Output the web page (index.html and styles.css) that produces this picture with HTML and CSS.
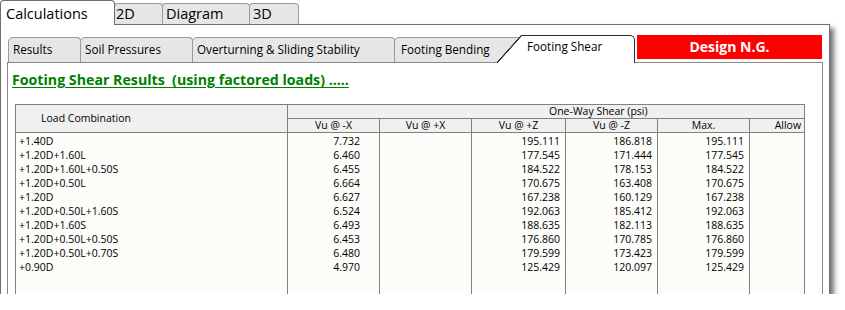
FILE: index.html
```html
<!DOCTYPE html>
<html lang="en">
<head>
    <meta charset="utf-8" />
    <title>Footing Shear</title>
    <link rel="stylesheet" href="styles.css">
</head>
<body>
    <div class="window">
        <div class="main-tabs">
            <div class="main-tab active">Calculations</div>
            <div class="main-tab tab-2d">2D</div>
            <div class="main-tab tab-diagram">Diagram</div>
            <div class="main-tab tab-3d">3D</div>
        </div>

        <div class="main-panel">
            <div class="sub-tabs">
                <div class="sub-tab tab-results">Results</div>
                <div class="sub-tab tab-soil">Soil Pressures</div>
                <div class="sub-tab tab-overturning">Overturning &amp; Sliding Stability</div>
                <div class="sub-tab tab-bending">Footing Bending</div>
                <div class="sub-tab active tab-shear">Footing Shear</div>
                <div class="design-status">Design N.G.</div>
            </div>

            <div class="sub-panel">
                <h2 class="results-title">Footing Shear Results&nbsp; (using factored loads) .....</h2>

                <div class="grid-wrap">
                    <table class="results-grid">
                        <colgroup>
                            <col class="col-load">
                            <col class="col-num">
                            <col class="col-num">
                            <col class="col-wide">
                            <col class="col-num">
                            <col class="col-num">
                            <col class="col-allow">
                        </colgroup>
                        <thead>
                            <tr>
                                <th rowspan="2" class="head-load">Load Combination</th>
                                <th colspan="6" class="head-group">One-Way Shear (psi)</th>
                            </tr>
                            <tr class="head-sub">
                                <th>Vu @ -X</th>
                                <th>Vu @ +X</th>
                                <th>Vu @ +Z</th>
                                <th>Vu @ -Z</th>
                                <th>Max.</th>
                                <th class="head-allow">Allow</th>
                            </tr>
                        </thead>
                        <tbody>
                            <tr><td>+1.40D</td><td class="num-x">7.732</td><td></td><td>195.111</td><td>186.818</td><td>195.111</td><td></td></tr>
                            <tr><td>+1.20D+1.60L</td><td class="num-x">6.460</td><td></td><td>177.545</td><td>171.444</td><td>177.545</td><td></td></tr>
                            <tr><td>+1.20D+1.60L+0.50S</td><td class="num-x">6.455</td><td></td><td>184.522</td><td>178.153</td><td>184.522</td><td></td></tr>
                            <tr><td>+1.20D+0.50L</td><td class="num-x">6.664</td><td></td><td>170.675</td><td>163.408</td><td>170.675</td><td></td></tr>
                            <tr><td>+1.20D</td><td class="num-x">6.627</td><td></td><td>167.238</td><td>160.129</td><td>167.238</td><td></td></tr>
                            <tr><td>+1.20D+0.50L+1.60S</td><td class="num-x">6.524</td><td></td><td>192.063</td><td>185.412</td><td>192.063</td><td></td></tr>
                            <tr><td>+1.20D+1.60S</td><td class="num-x">6.493</td><td></td><td>188.635</td><td>182.113</td><td>188.635</td><td></td></tr>
                            <tr><td>+1.20D+0.50L+0.50S</td><td class="num-x">6.453</td><td></td><td>176.860</td><td>170.785</td><td>176.860</td><td></td></tr>
                            <tr><td>+1.20D+0.50L+0.70S</td><td class="num-x">6.480</td><td></td><td>179.599</td><td>173.423</td><td>179.599</td><td></td></tr>
                            <tr><td>+0.90D</td><td class="num-x">4.970</td><td></td><td>125.429</td><td>120.097</td><td>125.429</td><td></td></tr>
                            <tr class="filler"><td></td><td></td><td></td><td></td><td></td><td></td><td></td></tr>
                        </tbody>
                    </table>
                </div>
            </div>
        </div>
    </div>
</body>
</html>
```

FILE: styles.css
```css
* {
    margin: 0;
    padding: 0;
    box-sizing: border-box;
}

body {
    font-family: "Open Sans", "Noto Sans", sans-serif;
    background: #fff;
    color: #000;
}

.window {
    width: 830px;
}

/* top level tabs */
.main-tabs {
    display: flex;
    align-items: flex-end;
    height: 24px;
}

.main-tab {
    height: 21px;
    margin-right: -1px;
    padding: 0 3px;
    background: #e6e6e6;
    border: 1px solid #9a9a9a;
    border-bottom: none;
    border-radius: 4px 4px 0 0;
    font-size: 14.5px;
    line-height: 20px;
    overflow: hidden;
}

.main-tab.active {
    position: relative;
    z-index: 1;
    width: 115px;
    height: 25px;
    margin-bottom: -1px;
    padding: 3px 0 0 5px;
    background: #fff;
    border-color: #6e6e6e;
}

.tab-2d { width: 49px; padding-left: 1px; }
.tab-diagram { width: 88px; }
.tab-3d { width: 50px; }

.main-panel {
    height: 270px;
    padding: 10px 6px 0;
    border: 1px solid #6e6e6e;
    border-bottom: none;
    overflow: hidden;
    box-shadow: 4px 4px 5px rgba(0, 0, 0, 0.55);
}

/* second level tabs */
.sub-tabs {
    display: flex;
    align-items: flex-end;
    height: 27px;
    padding-left: 1px;
}

.sub-tab {
    height: 25px;
    margin-right: -1px;
    padding: 3px 0 0 4px;
    background: #e6e6e6;
    border: 1px solid #9a9a9a;
    border-bottom: none;
    border-radius: 5px 4px 0 0;
    font-size: 11.7px;
    line-height: 16px;
    white-space: nowrap;
    overflow: hidden;
}

.tab-results { width: 73px; }
.tab-soil { width: 113px; }
.tab-overturning { width: 203px; }
.tab-bending { width: 129px; padding-left: 6px; }

.sub-tab.active {
    position: relative;
    z-index: 1;
    width: 113px;
    height: 28px;
    margin-bottom: -1px;
    padding: 2px 0 0 5px;
    background: #fff;
    border-color: #2a2a2a;
    border-left: none;
    border-radius: 0 5px 0 0;
    overflow: visible;
}

.sub-tab.active::before {
    content: "";
    position: absolute;
    left: -25px;
    top: -1px;
    width: 25px;
    height: 28px;
    background: linear-gradient(to bottom right,
        transparent calc(50% - 1px),
        #2a2a2a calc(50% - 0.5px),
        #2a2a2a calc(50% + 0.3px),
        #fff calc(50% + 0.8px));
}

.design-status {
    align-self: flex-start;
    width: 185px;
    height: 24px;
    margin-left: 3px;
    background: #ff0000;
    color: #fff;
    font-size: 14px;
    font-weight: 700;
    line-height: 23px;
    text-align: center;
}

.sub-panel {
    height: 240px;
    border: 1px solid #8a8a8a;
    border-bottom: none;
}

.results-title {
    margin: 8px 0 0 4px;
    color: #008000;
    font-size: 14.2px;
    font-weight: 700;
    line-height: 18px;
    text-decoration: underline;
    text-underline-offset: 2px;
}

/* results grid */
.grid-wrap {
    margin: 15px 0 0 7px;
}

.results-grid {
    width: 790px;
    table-layout: fixed;
    border-collapse: collapse;
    border: 1px solid #808080;
    font-size: 10.5px;
    line-height: 13px;
}

.col-load { width: 272px; }
.col-num { width: 92px; }
.col-wide { width: 94px; }
.col-allow { width: 55px; }

.results-grid th {
    height: 14px;
    padding: 0;
    background: #f0f0f0;
    border: 1px solid #808080;
    font-weight: 400;
    text-align: center;
    white-space: nowrap;
    overflow: hidden;
}

.results-grid .head-load {
    padding-left: 25px;
    text-align: left;
}

.results-grid .head-group {
    padding-left: 261px;
    text-align: left;
}

.results-grid .head-allow {
    padding-right: 3px;
    text-align: right;
}

.results-grid td {
    height: 14px;
    padding: 0 5px 0 0;
    background: #fcfcf9;
    border-left: 1px solid #808080;
    border-right: 1px solid #808080;
    text-align: right;
    white-space: nowrap;
    line-height: 14px;
}

.results-grid td:first-child {
    padding: 0 0 0 3px;
    text-align: left;
}

.results-grid td.num-x {
    padding-right: 19px;
}

.results-grid tbody tr:first-child td {
    padding-top: 1px;
}

.results-grid .filler td {
    height: 40px;
}
```
